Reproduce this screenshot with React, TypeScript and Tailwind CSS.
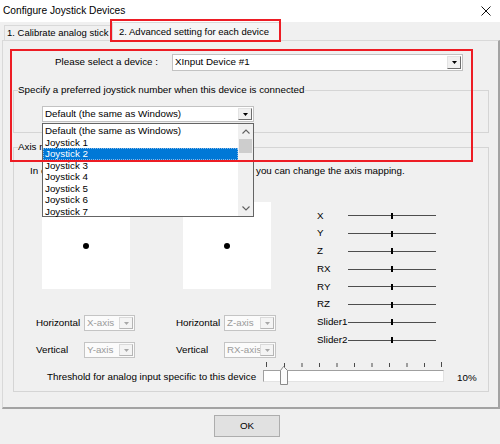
import React from "react"

const font = "font-['Liberation_Sans',Arial,sans-serif]"

function Arrow({ disabled }: { disabled?: boolean }) {
  return (
    <svg width="5" height="3" viewBox="0 0 5 3">
      <path d="M0 0h5L2.5 3z" fill={disabled ? "#a8a8a8" : "#000"} />
    </svg>
  )
}

function Combo({ text, className, disabled }: { text: string; className: string; disabled?: boolean }) {
  return (
    <div
      className={`flex items-stretch border ${
        disabled ? "border-[#c4c4c4] bg-[#fbfbfb] text-[#9a9a9a]" : "border-[#c2c2c2] bg-white"
      } ${className}`}
    >
      <div className="flex-1 flex items-center pl-[2px] whitespace-nowrap overflow-hidden">{text}</div>
      <div
        className={`w-[14px] my-px mr-px flex items-center justify-center border ${
          disabled
            ? "bg-[#f4f4f4] border-[#dadada] border-b-[#b5b5b5] border-r-[#b5b5b5]"
            : "bg-[#f0f0f0] border-[#e3e3e3] border-b-[#6d6d6d] border-r-[#6d6d6d]"
        }`}
      >
        <Arrow disabled={disabled} />
      </div>
    </div>
  )
}

function Chevron({ down }: { down?: boolean }) {
  return (
    <svg width="8" height="5" viewBox="0 0 8 5">
      <path d={down ? "M0.5 0.5L4 4L7.5 0.5" : "M0.5 4.5L4 1L7.5 4.5"} stroke="#606060" strokeWidth="1.1" fill="none" />
    </svg>
  )
}

export default function App() {
  const items = [
    "Default (the same as Windows)",
    "Joystick 1",
    "Joystick 2",
    "Joystick 3",
    "Joystick 4",
    "Joystick 5",
    "Joystick 6",
    "Joystick 7",
  ]
  const axes = ["X", "Y", "Z", "RX", "RY", "RZ", "Slider1", "Slider2"]
  const ticks = [3, 21, 38.5, 56, 73.5, 91, 108.5, 126, 143.5, 161, 178]

  return (
    <div className={`relative w-[500px] h-[444px] overflow-hidden bg-[#f0f0f0] text-[9.8px] text-black ${font}`}>
      {/* title bar */}
      <div className="h-[22px] bg-white flex items-center justify-between pl-[3px] pr-[9px]">
        <span className="text-[10.2px]">Configure Joystick Devices</span>
        <svg width="10" height="10" viewBox="0 0 10 10">
          <path d="M0.5 0.5l9 9M9.5 0.5l-9 9" stroke="#111" strokeWidth="1" />
        </svg>
      </div>

      {/* tabs */}
      <div className="h-[18px] flex items-end">
        <div className="ml-[4px] w-[107px] h-[15px] border border-b-0 border-[#d9d9d9] flex items-center pl-[2px] whitespace-nowrap text-[9.5px]">
          1. Calibrate analog stick
        </div>
        <div className="relative ml-px w-[168px] h-[19px] -mb-px bg-[#f5f5f5] border border-b-0 border-[#d9d9d9] flex items-center pl-[6px] whitespace-nowrap text-[9.5px]">
          2. Advanced setting for each device
        </div>
      </div>

      {/* tab page */}
      <div className="relative ml-[2px] w-[498px] h-[369px] border border-[#d9d9d9] border-r-2 border-b-2 border-r-[#a3a3a3] border-b-[#a3a3a3]">
        <div className="mt-[13px] flex items-center h-[17px]">
          <div className="w-[155px] text-right whitespace-nowrap">Please select a device :</div>
          <Combo text="XInput Device #1" className="ml-[14px] w-[291px] h-[17px]" />
        </div>

        <fieldset className="ml-[10px] mt-[13px] w-[476px] h-[49px] border border-[#d5d5d5]">
          <legend className="ml-[4px] pr-px leading-[12px] whitespace-nowrap">
            Specify a preferred joystick number when this device is connected
          </legend>
          <div className="pl-[28px] pt-[10px]">
            <div className="relative w-[212px]">
              <Combo text="Default (the same as Windows)" className="w-[212px] h-[16px]" />
              <div className="absolute z-10 left-0 top-[17px] w-[212px] h-[94px] flex border border-[#646464] bg-white">
                <div className="flex-1 pt-px">
                  {items.map((it) => (
                    <div
                      key={it}
                      className={`h-[11.5px] leading-[11.5px] pl-[2px] whitespace-nowrap ${
                        it === "Joystick 2" ? "bg-[#0078d7] text-white outline-1 outline-dotted outline-[#8ab8e6] -outline-offset-1" : ""
                      }`}
                    >
                      {it}
                    </div>
                  ))}
                </div>
                <div className="w-[15px] bg-[#f0f0f0] flex flex-col">
                  <div className="h-[15px] flex items-center justify-center">
                    <Chevron />
                  </div>
                  <div className="h-[14px] mx-px bg-[#cdcdcd]" />
                  <div className="flex-1" />
                  <div className="h-[15px] flex items-center justify-center">
                    <Chevron down />
                  </div>
                </div>
              </div>
            </div>
          </div>
        </fieldset>

        <fieldset className="ml-[10px] mt-[8px] w-[476px] h-[251px] border border-[#d5d5d5]">
          <legend className="ml-[4px] pr-px leading-[12px] whitespace-nowrap">Axis mapping</legend>
          <p className="mt-[12px] pl-[16px] leading-[12px] whitespace-nowrap">
            <span className="inline-block w-[226px] overflow-hidden align-top">
              In case the axes are not assigned as expected,
            </span>
            you can change the axis mapping.
          </p>

          <div className="mt-[25px] flex">
            <div className="w-[262px]">
              <div className="flex">
                <div className="ml-[28px] w-[88px] h-[87px] bg-white flex items-center justify-center">
                  <div className="w-[6px] h-[6px] rounded-full bg-black" />
                </div>
                <div className="ml-[53px] w-[88px] h-[87px] bg-white flex items-center justify-center">
                  <div className="w-[6px] h-[6px] rounded-full bg-black" />
                </div>
              </div>
              <div className="mt-[26px] flex items-center h-[16px]">
                <div className="ml-[22px] w-[48px]">Horizontal</div>
                <Combo text="X-axis" className="w-[51px] h-[16px]" disabled />
                <div className="ml-[41px] w-[48px]">Horizontal</div>
                <Combo text="Z-axis" className="w-[52px] h-[16px]" disabled />
              </div>
              <div className="mt-[11px] flex items-center h-[16px]">
                <div className="ml-[22px] w-[48px]">Vertical</div>
                <Combo text="Y-axis" className="w-[51px] h-[16px]" disabled />
                <div className="ml-[41px] w-[48px]">Vertical</div>
                <Combo text="RX-axis" className="w-[52px] h-[16px]" disabled />
              </div>
            </div>

            <div className="ml-[41px] pt-[5px]">
              {axes.map((a) => (
                <div key={a} className="h-[17.75px] flex items-center">
                  <div className="w-[31px] whitespace-nowrap">{a}</div>
                  <div className="relative w-[88px] h-px bg-[#4d4d4d]">
                    <div className="absolute left-[43px] -top-[2.5px] w-[2px] h-[6px] bg-black" />
                  </div>
                </div>
              ))}
            </div>
          </div>

          <div className="mt-[4px] flex">
            <div className="ml-[33px] w-[216px] pt-[9px] leading-[12px] whitespace-nowrap">
              Threshold for analog input specific to this device
            </div>
            <div className="w-[181px]">
              <svg width="181" height="5" viewBox="0 0 181 5" className="block">
                {ticks.map((t, i) => (
                  <rect
                    key={t}
                    x={t}
                    y={i === 0 || i === ticks.length - 1 ? 0 : 1}
                    width="1"
                    height={i === 0 || i === ticks.length - 1 ? 5 : 4}
                    fill="#4a4a4a"
                  />
                ))}
              </svg>
              <div className="relative mt-[3px] h-[12px] bg-white border border-[#e3e3e3] border-t-[#a0a0a0] border-l-[#a0a0a0]">
                <svg width="9" height="19" viewBox="0 0 9 19" className="absolute left-[16px] -top-[5px]">
                  <path d="M0.5 4.5L3.5 0.5L7.5 4.5V18.5H0.5Z" fill="#fbfbfb" stroke="#8a8a8a" strokeWidth="1" />
                </svg>
              </div>
            </div>
            <div className="ml-[13px] pt-[10px] leading-[12px]">10%</div>
          </div>
        </fieldset>

        {/* highlight */}
        <div className="absolute z-20 left-[7px] top-[8px] w-[463px] h-[113px] border-2 border-[#ed1c24]" />
      </div>

      <div className="mt-[6px] ml-[214px] w-[66px] h-[22px] border border-[#adadad] bg-[#e1e1e1] flex items-center justify-center">
        OK
      </div>

      <div className="absolute z-20 left-[110px] top-[19px] w-[171px] h-[23px] border-2 border-[#ed1c24]" />
    </div>
  )
}
